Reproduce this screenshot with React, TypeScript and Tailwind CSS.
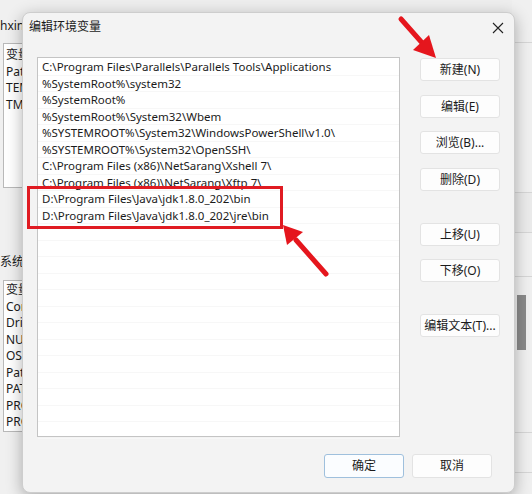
import React from "react";

const paths = [
  "C:\\Program Files\\Parallels\\Parallels Tools\\Applications",
  "%SystemRoot%\\system32",
  "%SystemRoot%",
  "%SystemRoot%\\System32\\Wbem",
  "%SYSTEMROOT%\\System32\\WindowsPowerShell\\v1.0\\",
  "%SYSTEMROOT%\\System32\\OpenSSH\\",
  "C:\\Program Files (x86)\\NetSarang\\Xshell 7\\",
  "C:\\Program Files (x86)\\NetSarang\\Xftp 7\\",
  "D:\\Program Files\\Java\\jdk1.8.0_202\\bin",
  "D:\\Program Files\\Java\\jdk1.8.0_202\\jre\\bin",
];

const font = { fontFamily: '"Noto Sans", "Noto Sans CJK SC", sans-serif' };

function Btn({ label, className = "" }: { label: string; className?: string }) {
  return (
    <div
      className={
        "w-[80px] h-[23px] flex items-center justify-center bg-[#fdfdfd] border border-[#e3e3e3] rounded-[3px] text-[12px] text-[#1b1b1b] " +
        className
      }
    >
      {label}
    </div>
  );
}

export default function App() {
  return (
    <div
      className="relative w-[532px] h-[494px] overflow-hidden bg-[#eeeeee] text-[#1b1b1b]"
      style={font}
    >
      {/* 뒤쪽 창 */}
      <div className="flex w-full h-full">
        <div className="w-[40px] flex flex-col bg-[#f0f0f0] whitespace-nowrap">
          <div className="h-[43px] pt-[18px] text-[12px] leading-[16px]">hxin</div>
          <div className="ml-[3px] h-[145px] bg-white border border-[#b9b9b9] text-[12px] leading-[16.5px] pl-[2px] pt-[3px]">
            <div>变量</div>
            <div>Path</div>
            <div>TEMP</div>
            <div>TMP</div>
          </div>
          <div className="h-[92px] pt-[66px] text-[12px] leading-[16px]">系统变量</div>
          <div className="ml-[3px] h-[152px] bg-white border border-[#b9b9b9] text-[12px] leading-[16.5px] pl-[2px] pt-[1px]">
            <div>变量</div>
            <div>Com</div>
            <div>Dri</div>
            <div>NUM</div>
            <div>OS</div>
            <div>Path</div>
            <div>PAT</div>
            <div>PRO</div>
            <div>PRO</div>
          </div>
        </div>
        <div className="flex-1" />
        <div className="w-[20px] flex flex-col bg-[#f0f0f0]">
          <div className="h-[43px] border-b border-[#d6d6d6]" />
          <div className="h-[150px] border-b border-[#d6d6d6]" />
          <div className="h-[40px] border-b border-[#d6d6d6] bg-[#ebebeb]" />
          <div className="h-[44px] border-b border-[#d6d6d6]" />
          <div className="h-[156px] pt-[18px] pl-[5px] border-b border-[#d6d6d6]">
            <div className="w-[9px] h-[55px] bg-[#8a8a8a]" />
          </div>
          <div className="h-[40px] border-b border-[#d6d6d6]" />
        </div>
      </div>

      {/* 편집 대화상자 */}
      <div className="absolute left-[22px] top-[12px] w-[493px] h-[481px] bg-[#f3f3f3] border border-[#cdcdcd] rounded-[8px] shadow-[0_4px_16px_rgba(0,0,0,0.3)] flex flex-col">
        <div className="h-[44px] flex items-start justify-between pl-[6px] pr-[10px] pt-[5px]">
          <span className="text-[12px] leading-[18px]">编辑环境变量</span>
          <svg width="12" height="12" viewBox="0 0 12 12" className="mt-[4px]">
            <path d="M1 1 L11 11 M11 1 L1 11" stroke="#222" strokeWidth="1.1" />
          </svg>
        </div>
        <div className="flex">
          <div className="ml-[14px] w-[363px] h-[380px] bg-white border border-[#c4c4c4] pt-[1px]">
            {Array.from({ length: 23 }).map((_, i) => (
              <div
                key={i}
                className="h-[16.5px] leading-[16.5px] pl-[4px] text-[11.5px] whitespace-nowrap overflow-hidden border-b border-[#f7f7f7]"
              >
                {paths[i] ?? ""}
              </div>
            ))}
          </div>
          <div className="ml-[20px] flex flex-col pt-[1px]">
            <Btn label="新建(N)" />
            <Btn label="编辑(E)" className="mt-[14px]" />
            <Btn label="浏览(B)..." className="mt-[13px]" />
            <Btn label="删除(D)" className="mt-[14px]" />
            <Btn label="上移(U)" className="mt-[32px]" />
            <Btn label="下移(O)" className="mt-[13px]" />
            <Btn label="编辑文本(T)..." className="mt-[32px]" />
          </div>
        </div>
        <div className="flex justify-end gap-[8px] pr-[22px] mt-[17px]">
          <div className="w-[80px] h-[24px] flex items-center justify-center bg-[#fbfdff] border border-[#9fc0dd] rounded-[3px] text-[12px]">
            确定
          </div>
          <div className="w-[80px] h-[24px] flex items-center justify-center bg-[#fdfdfd] border border-[#e3e3e3] rounded-[3px] text-[12px]">
            取消
          </div>
        </div>
      </div>

      {/* 빨간 강조 표시 */}
      <div className="absolute left-[27px] top-[186px] w-[256px] h-[43px] border-[3px] border-[#e01b22]" />
      <svg className="absolute left-0 top-0" width="532" height="494">
        <line x1="401" y1="19" x2="424" y2="45" stroke="#e5161d" strokeWidth="5" strokeLinecap="round" />
        <polygon points="436,58 413,50 429,35" fill="#e5161d" />
        <line x1="326" y1="274" x2="296" y2="240" stroke="#e5161d" strokeWidth="5" strokeLinecap="round" />
        <polygon points="283,225 303,232 287,245" fill="#e5161d" />
      </svg>
    </div>
  );
}
